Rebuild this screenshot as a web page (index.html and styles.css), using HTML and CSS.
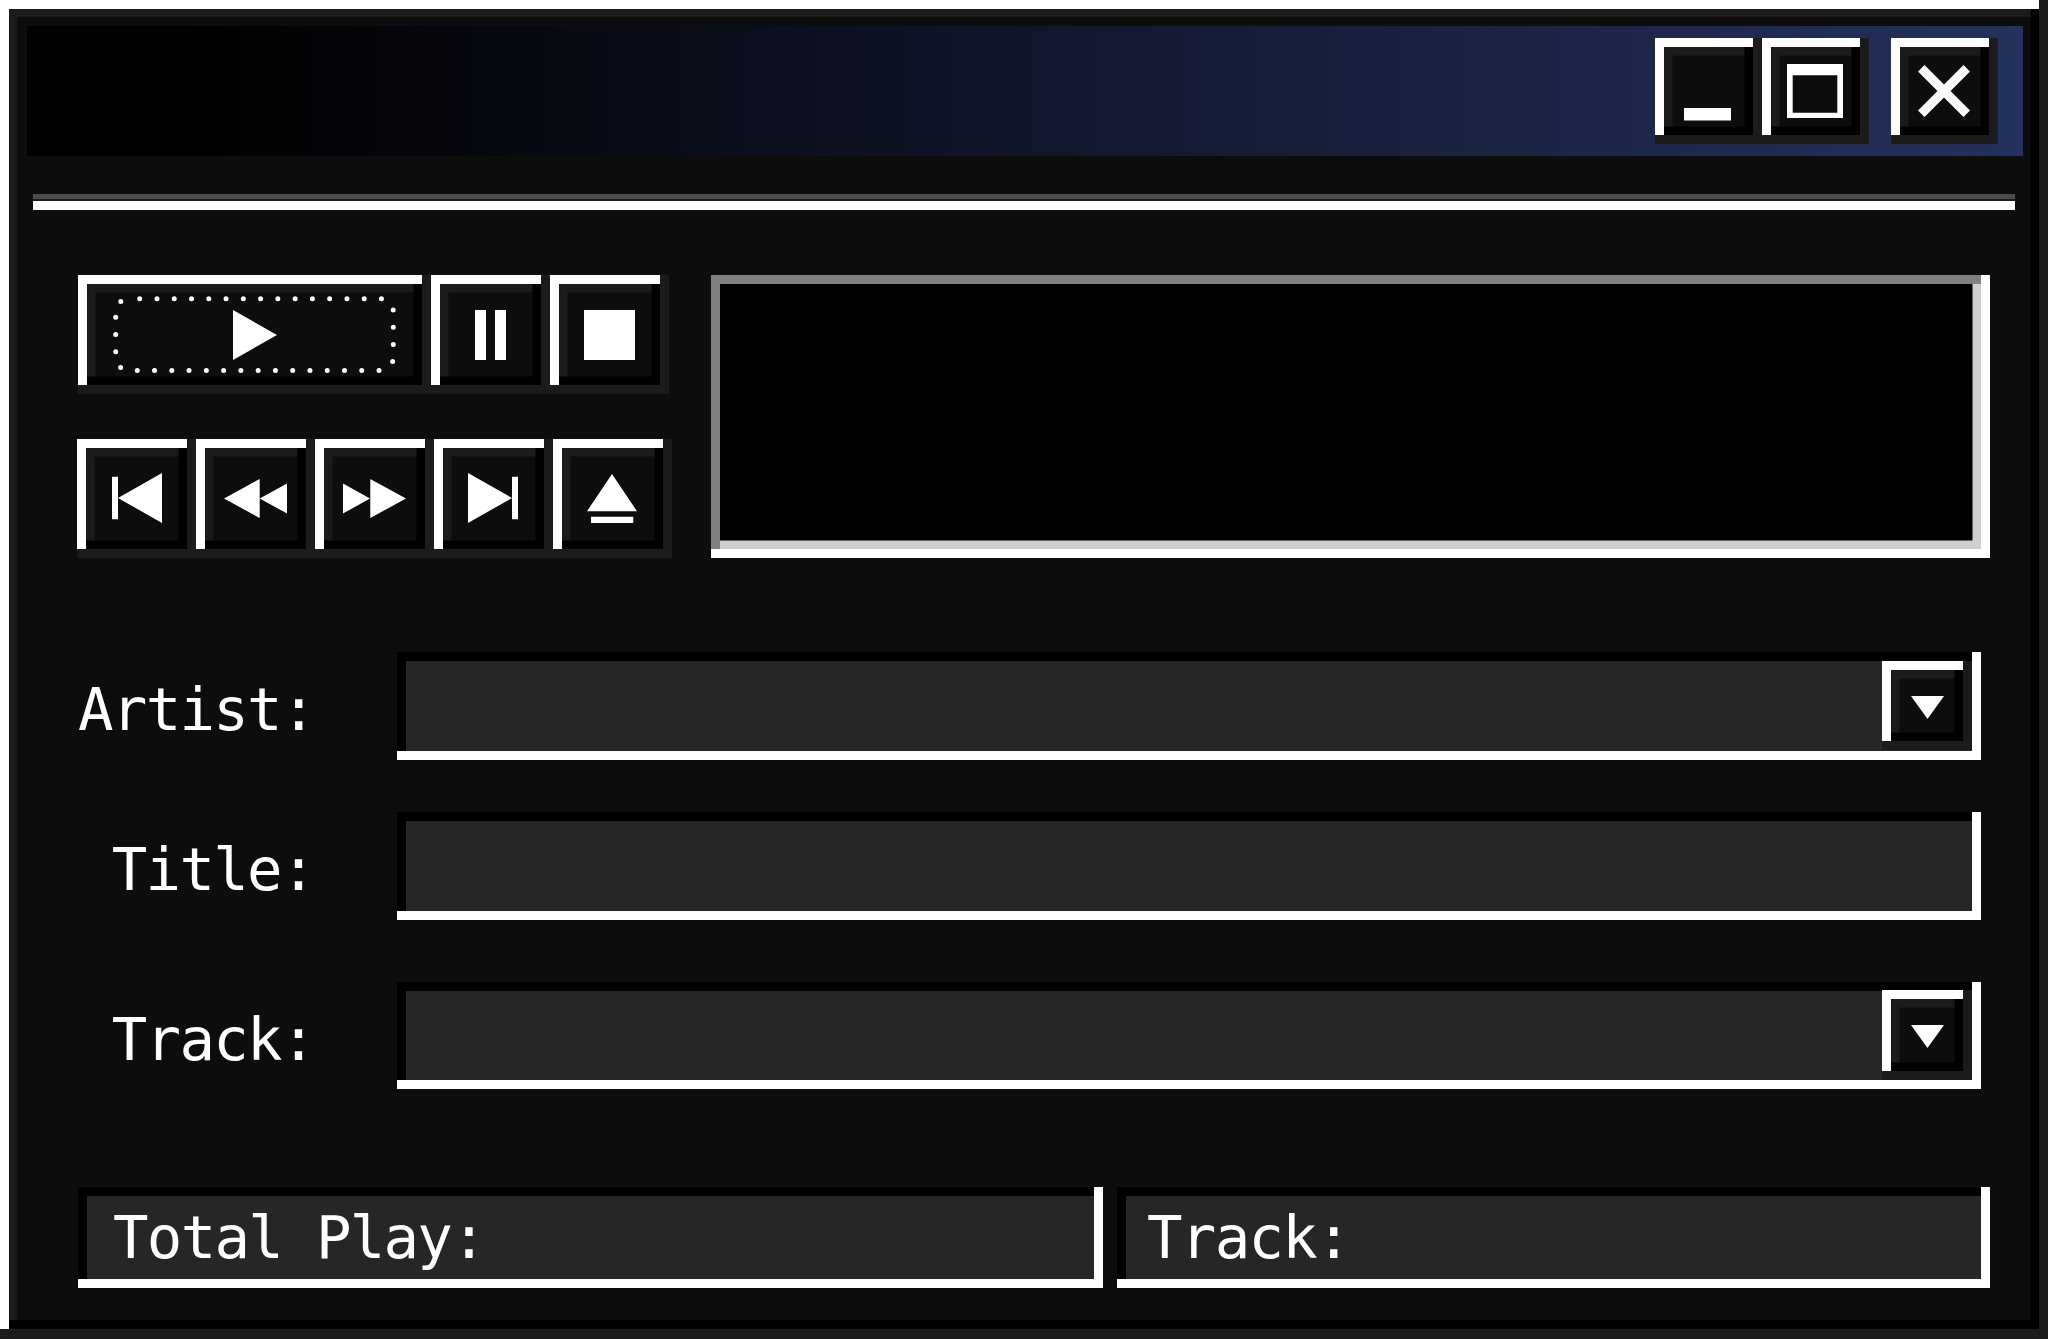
FILE: index.html
```html
<!DOCTYPE html>
<html lang="en">
<head>
<meta charset="utf-8">
<title>CD Player</title>
<link rel="stylesheet" href="styles.css">
</head>
<body>
<main class="window">
  <header class="titlebar">
    <button class="btn title-btn" aria-label="Minimize"><svg width="47" height="12.5" viewBox="0 0 47 12.5" class="icon-min"><rect width="47" height="12.5" fill="#fff"/></svg></button>
    <button class="btn title-btn" aria-label="Maximize"><svg width="56" height="54" viewBox="0 0 56 54"><path fill="#fff" fill-rule="evenodd" d="M0 0H56V54H0ZM5.7 11.3V48.7H50.3V11.3Z"/></svg></button>
    <button class="btn title-btn title-close" aria-label="Close"><svg width="52" height="52" viewBox="0 0 52 52"><path fill="#fff" d="M0 6.5 6.5 0 26 19.5 45.5 0 52 6.5 32.5 26 52 45.5 45.5 52 26 32.5 6.5 52 0 45.5 19.5 26Z"/></svg></button>
  </header>
  <div class="separator"></div>
  <div class="content">
    <section class="player">
      <div class="controls">
        <div class="control-row first">
          <button class="btn btn-play" aria-label="Play">
            <svg class="focus" width="353" height="119" viewBox="0 0 353 119"><rect x="37.7" y="23.7" width="277.6" height="71.7" rx="13" fill="none" stroke="#fff" stroke-width="5" stroke-linecap="round" stroke-dasharray="0 17.27" stroke-dashoffset="-11"/></svg>
            <svg class="nudge-right" width="44" height="50" viewBox="0 0 44 50"><path fill="#fff" d="M0 0 44 25 0 50Z"/></svg>
          </button>
          <button class="btn btn-square" aria-label="Pause"><svg width="31" height="50" viewBox="0 0 31 50"><path fill="#fff" d="M0 0H11V50H0ZM20 0H31V50H20Z"/></svg></button>
          <button class="btn btn-square" aria-label="Stop"><svg width="51" height="50" viewBox="0 0 51 50"><rect width="51" height="50" fill="#fff"/></svg></button>
        </div>
        <div class="control-row second">
          <button class="btn btn-square" aria-label="Previous"><svg class="nudge-right" width="50" height="50" viewBox="0 0 50 50"><path fill="#fff" d="M0 3.7H6V46.3H0ZM50 0V50L6 25Z"/></svg></button>
          <button class="btn btn-square" aria-label="Rewind"><svg width="63" height="39" viewBox="0 0 63 39"><path fill="#fff" d="M0 19.5 35.7 0V39ZM35.7 19.5 63 4.5V34.5Z"/></svg></button>
          <button class="btn btn-square" aria-label="Fast forward"><svg width="63" height="39" viewBox="0 0 63 39"><path fill="#fff" d="M0 4.5 27 19.5 0 34.5ZM27.3 0 63 19.5 27.3 39Z"/></svg></button>
          <button class="btn btn-square" aria-label="Next"><svg width="50" height="50" viewBox="0 0 50 50"><path fill="#fff" d="M0 0 44 25 0 50ZM44 3.7H50V46.3H44Z"/></svg></button>
          <button class="btn btn-square" aria-label="Eject"><svg width="50" height="49" viewBox="0 0 50 49"><path fill="#fff" d="M25 0 50 37.3H0ZM4 42.7H46.3V49H4Z"/></svg></button>
        </div>
      </div>
      <div class="display"></div>
    </section>

    <div class="form-row row-artist">
      <label class="label">Artist:</label>
      <div class="field">
        <button class="btn btn-drop" aria-label="Open artist list"><svg class="nudge-down" width="33" height="23" viewBox="0 0 33 23"><path fill="#fff" d="M0 0H33L16.5 23Z"/></svg></button>
      </div>
    </div>
    <div class="form-row row-title">
      <label class="label">Title:</label>
      <div class="field"></div>
    </div>
    <div class="form-row row-track">
      <label class="label">Track:</label>
      <div class="field">
        <button class="btn btn-drop" aria-label="Open track list"><svg class="nudge-down" width="33" height="23" viewBox="0 0 33 23"><path fill="#fff" d="M0 0H33L16.5 23Z"/></svg></button>
      </div>
    </div>

    <footer class="statusbar">
      <div class="field status status-total">Total Play:</div>
      <div class="field status status-track">Track:</div>
    </footer>
  </div>
</main>
</body>
</html>
```

FILE: styles.css
```css
* { box-sizing: border-box; }
html, body { margin: 0; padding: 0; background: #1b1b1b; }
.window {
  width: 2048px;
  height: 1339px;
  padding: 26px 24.7px 0 26.7px;
  overflow: hidden;
  background: #0d0d0d;
  box-shadow:
    inset -9px -10px #1b1b1b,
    inset 9px 9px #fff,
    inset -17.33px -18.67px #000,
    inset 17.33px 17.33px #1b1b1b;
  font-family: "DejaVu Sans Mono", "Liberation Mono", monospace;
  font-size: 59px;
  letter-spacing: -1.7px;
  color: #fff;
}
.titlebar {
  display: flex;
  align-items: center;
  justify-content: flex-end;
  height: 130px;
  padding-right: 25.6px;
  background: linear-gradient(90deg, #000 8%, #25315e 100%);
}
.btn {
  position: relative;
  display: flex;
  flex: none;
  align-items: center;
  justify-content: center;
  padding: 0;
  border: 0;
  background: #0d0d0d;
  box-shadow:
    inset -9px -9px #1b1b1b,
    inset 9px 9px #fff,
    inset -17.5px -17.5px #000,
    inset 17.5px 17.5px #1b1b1b;
}
.title-btn { width: 106.8px; height: 106.8px; }
.title-close { margin-left: 22.4px; }
.icon-min { position: relative; top: 23.5px; left: -1px; }
.nudge-right { margin-left: 1px; }
.nudge-down { margin-top: 3px; }
.separator {
  height: 16px;
  margin: 38px 8.3px 0 6.3px;
  border-top: 5px solid #4d4d4d;
  border-bottom: 9px solid #fff;
  background: #1b1b1b;
}
.content { padding-left: 51.3px; }
.player {
  display: flex;
  justify-content: space-between;
  height: 282.4px;
  margin-top: 65.3px;
  padding-right: 33.6px;
}
.controls { display: flex; flex-direction: column; gap: 45px; }
.control-row { display: flex; }
.second { margin-left: -1px; }
.btn-play { width: 353px; height: 118.7px; }
.btn-square { width: 119px; height: 118.7px; }
.focus { position: absolute; top: 0; left: 0; }
.display {
  width: 1278.4px;
  background: #000;
  box-shadow:
    inset -9px -9px #fff,
    inset 9px 9px #808080,
    inset -17.5px -17.5px #cfcfcf;
}
.form-row { display: flex; align-items: center; gap: 82px; }
.row-artist { margin-top: 94.6px; }
.row-title { margin-top: 52.3px; }
.row-track { margin-top: 62px; }
.label { width: 236.7px; padding-top: 8px; text-align: right; line-height: 99.5px; white-space: nowrap; }
.field {
  display: flex;
  justify-content: flex-end;
  align-items: flex-start;
  width: 1584.3px;
  height: 107.5px;
  padding: 8.67px 8.67px 0 0;
  background: #262626;
  box-shadow:
    inset -9px -9px #fff,
    inset 9px 9px #000;
}
.btn-drop { width: 90.3px; height: 89.3px; }
.statusbar { display: flex; gap: 14px; margin-top: 98px; }
.status { display: block; height: 100.7px; padding: 2px 0 0; line-height: 98.7px; }
.status-total { width: 1025px; padding-left: 35px; }
.status-track { width: 872.7px; padding-left: 30px; }
```
